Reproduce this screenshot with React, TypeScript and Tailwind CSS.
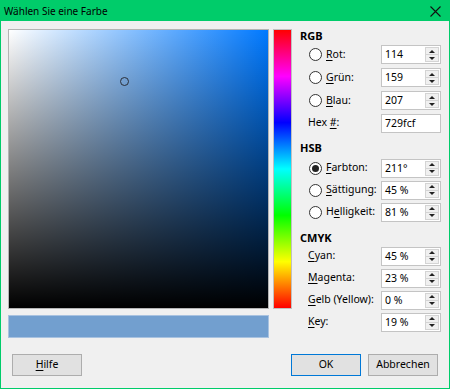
import React from 'react';

const FONT = { fontFamily: '"Noto Sans", "Open Sans", sans-serif' };

function Acc({ text, idx }: { text: string; idx: number }) {
  return (
    <>
      {text.slice(0, idx)}
      <span className="underline underline-offset-[2px]">{text[idx]}</span>
      {text.slice(idx + 1)}
    </>
  );
}

function Radio({ checked }: { checked?: boolean }) {
  return (
    <span className="w-[13px] h-[13px] rounded-full border border-[#333] bg-white flex items-center justify-center shrink-0">
      {checked && <span className="w-[7px] h-[7px] rounded-full bg-[#222]" />}
    </span>
  );
}

function Spin({ value, spinner = true }: { value: string; spinner?: boolean }) {
  return (
    <div className="w-[60px] h-[19px] border border-[#c4c4c4] bg-white flex items-stretch">
      <span className="flex-1 pl-[3px] text-[10.5px] leading-[17px] text-black">{value}</span>
      {spinner && (
        <span className="w-[14px] my-[1px] mr-[1px] border border-[#d4d4d4] bg-[#f0f0f0] flex flex-col">
          <span className="flex-1 flex items-center justify-center border-b border-[#d4d4d4]">
            <span className="w-0 h-0 border-x-[3px] border-x-transparent border-b-[3px] border-b-[#222]" />
          </span>
          <span className="flex-1 flex items-center justify-center">
            <span className="w-0 h-0 border-x-[3px] border-x-transparent border-t-[3px] border-t-[#222]" />
          </span>
        </span>
      )}
    </div>
  );
}

function Heading({ children }: { children: React.ReactNode }) {
  return <div className="h-[14px] leading-[14px] text-[11px] font-bold text-black">{children}</div>;
}

function RadioRow({
  label,
  idx,
  value,
  checked,
  tall,
}: {
  label: string;
  idx: number;
  value: string;
  checked?: boolean;
  tall?: boolean;
}) {
  return (
    <div className={`${tall ? 'h-[23px]' : 'h-[22px]'} flex items-center`}>
      <div className="w-[81px] pl-[9px] flex items-center gap-[4px] text-[10.5px] text-black">
        <Radio checked={checked} />
        <span>
          <Acc text={label} idx={idx} />
        </span>
      </div>
      <Spin value={value} />
    </div>
  );
}

function PlainRow({ label, idx, value, spinner = true }: { label: string; idx: number; value: string; spinner?: boolean }) {
  return (
    <div className="h-[22px] flex items-center">
      <div className="w-[81px] pl-[8px] text-[10.5px] text-black">
        <Acc text={label} idx={idx} />
      </div>
      <Spin value={value} spinner={spinner} />
    </div>
  );
}

function Button({ children, primary }: { children: React.ReactNode; primary?: boolean }) {
  return (
    <button
      type="button"
      className={`w-[70px] h-[22px] text-[10.5px] text-black bg-[#e1e1e1] border ${
        primary ? 'border-[#0078d7]' : 'border-[#adadad]'
      }`}
    >
      {children}
    </button>
  );
}

export default function App() {
  return (
    <div className="w-[450px] h-[389px] border border-[#00cc6a] bg-[#f0f0f0] flex flex-col" style={FONT}>
      {/* Title bar */}
      <div className="h-[20px] bg-[#00cc6a] flex items-center justify-between pl-[3px] pr-[8px] shrink-0">
        <span className="text-[10px] text-black">Wählen Sie eine Farbe</span>
        <svg width="11" height="11" viewBox="0 0 11 11">
          <path d="M0.5 0.5 L10.5 10.5 M10.5 0.5 L0.5 10.5" stroke="#111" strokeWidth="1.1" />
        </svg>
      </div>

      <div className="flex-1 flex flex-col pt-[8px] px-[7px]">
        <div className="flex items-start">
          {/* Left column: field + preview */}
          <div className="flex flex-col w-[261px]">
            <div className="relative h-[280px] border border-[#b4b4b4] bg-[linear-gradient(to_top,#000,transparent),linear-gradient(to_right,#fff,#0079ff)]">
              <span className="absolute left-[111px] top-[47px] w-[9px] h-[9px] rounded-full border-[1.5px] border-[#2a2f38]" />
            </div>
            <div className="mt-[6px] h-[23px] border border-[#a8c2e0] bg-[#729fcf]" />
          </div>

          {/* Hue bar */}
          <div className="ml-[4px] w-[19px] h-[280px] border border-[#c0c0c0] bg-[linear-gradient(to_bottom,#ff0000,#ff00ff,#0000ff,#00ffff,#00ff00,#ffff00,#ff0000)]" />

          {/* Right panel */}
          <div className="ml-[8px] flex-1 flex flex-col">
            <Heading>RGB</Heading>
            <div>
              <RadioRow label="Rot:" idx={0} value="114" tall />
              <RadioRow label="Grün:" idx={0} value="159" tall />
              <RadioRow label="Blau:" idx={0} value="207" tall />
              <PlainRow label="Hex #:" idx={4} value="729fcf" spinner={false} />
            </div>
            <div className="mt-[7px]">
              <Heading>HSB</Heading>
            </div>
            <div className="mt-[2px]">
              <RadioRow label="Farbton:" idx={0} value="211°" checked />
              <RadioRow label="Sättigung:" idx={0} value="45 %" />
              <RadioRow label="Helligkeit:" idx={1} value="81 %" />
            </div>
            <div className="mt-[8px]">
              <Heading>CMYK</Heading>
            </div>
            <div>
              <PlainRow label="Cyan:" idx={0} value="45 %" />
              <PlainRow label="Magenta:" idx={0} value="23 %" />
              <PlainRow label="Gelb (Yellow):" idx={0} value="0 %" />
              <PlainRow label="Key:" idx={0} value="19 %" />
            </div>
          </div>
        </div>

        {/* Buttons */}
        <div className="mt-auto mb-[12px] flex items-center pl-[4px] pr-[4px]">
          <Button>
            <Acc text="Hilfe" idx={0} />
          </Button>
          <div className="ml-auto flex gap-[7px]">
            <Button primary>OK</Button>
            <Button>Abbrechen</Button>
          </div>
        </div>
      </div>
    </div>
  );
}
